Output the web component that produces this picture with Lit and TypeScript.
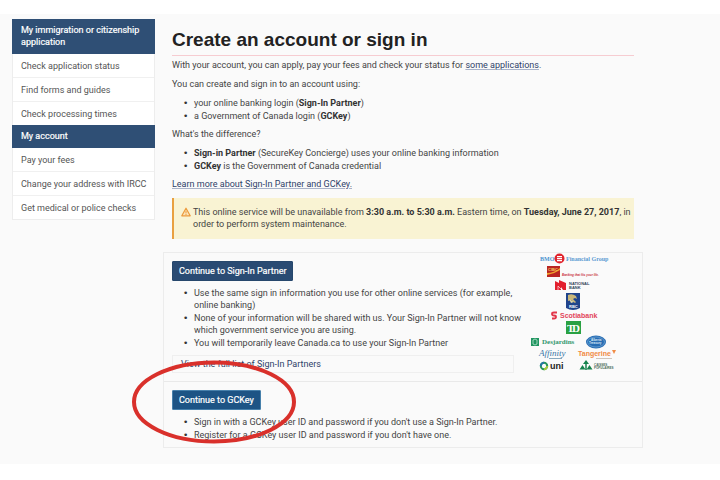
import { LitElement, html, css, svg } from "lit";
import { customElement } from "lit/decorators.js";

const sections = [
  {
    title: "My immigration or citizenship application",
    links: ["Check application status", "Find forms and guides", "Check processing times"],
  },
  {
    title: "My account",
    links: ["Pay your fees", "Change your address with IRCC", "Get medical or police checks"],
  },
];

@customElement("side-menu")
class SideMenu extends LitElement {
  static styles = css`
    :host { display: block; }
    .menu { border: 1px solid #ededed; border-top: 0; background: #fff; }
    .title { margin: 0 -1px; padding: 5px 9px 6px; background: #2f4f75; color: #fff; font-size: 9px; line-height: 12px; font-weight: 400; -webkit-text-stroke: 0.2px #fff; }
    .list { margin: 0; padding: 0; list-style: none; }
    .list li + li { border-top: 1px solid #f0f0f0; }
    .link { display: block; padding: 6px 4px 5px 8px; color: #555; font-size: 9px; line-height: 12px; text-decoration: none; }
  `;
  render() {
    return html`<nav class="menu" aria-label="Section menu">
      ${sections.map(
        (s) => html`<h2 class="title">${s.title}</h2>
          <ul class="list">${s.links.map((l) => html`<li><a class="link" href="#">${l}</a></li>`)}</ul>`
      )}
    </nav>`;
  }
}

@customElement("partner-logos")
class PartnerLogos extends LitElement {
  static styles = css`
    :host { display: block; }
    svg { display: block; }
    .serif { font-family: "Liberation Serif", serif; }
    .sans { font-family: "Liberation Sans", sans-serif; }
    .bold { font-weight: 700; }
    .italic { font-style: italic; }
  `;
  render() {
    return html`<svg width="88" height="120" viewBox="0 0 88 120" role="img" aria-label="Sign-In Partners">
      ${svg`
      <text class="serif bold" x="10" y="8" font-size="6" fill="#4d94cf">BMO</text>
      <circle cx="29.500" cy="5.500" r="5" fill="#e0242d"/>
      <path d="M27 3h5v1.200h-5zM27 5h5v1.200h-5zM27 7h5v1.200h-5z" fill="#fff"/>
      <text class="serif bold" x="36" y="8" font-size="6" fill="#5a9bd2">Financial Group</text>
      <rect x="17" y="13" width="13" height="11" fill="#b92522"/>
      <path d="M17 20q7 0 13-5v2q-6 4-13 5z" fill="#f2a52c"/>
      <text class="sans bold" x="18" y="18" font-size="4" fill="#f8c85e">CIBC</text>
      <text class="sans italic bold" x="32" y="23" font-size="3" fill="#c9303a">Banking that fits your life.</text>
      <path d="M25 28l4 2v-3l7 3v7h-3l-2-3v3h-6z" fill="#e21f2d"/>
      <path d="M28 37v-4l3 3" fill="none" stroke="#fff" stroke-width=".6"/>
      <text class="sans bold" x="39" y="32" font-size="4" fill="#34475a">NATIONAL</text>
      <text class="sans bold" x="39" y="36" font-size="4" fill="#34475a">BANK</text>
      <path d="M36 40h14v15q-7 4-14 0z" fill="#20448c"/>
      <path d="M38 42q4-2 8 1l1 3-2-1-2 1 3 3-1 1-4-3-3 1z" fill="#c9b77a"/>
      <path d="M39 46l5 3-3 1z" fill="#e4d8a6"/>
      <text class="sans bold" x="39" y="55" font-size="4" fill="#fff">RBC</text>
      <path d="M27 59.500h-3q-2 0-2 1.500t2 1.500 2 1.500-2 1.500h-2" fill="none" stroke="#e2364b" stroke-width="1.800"/>
      <text class="sans bold" x="30" y="65" font-size="7" fill="#e2465b">Scotiabank</text>
      <rect x="36" y="68" width="15" height="13" fill="#29a143"/>
      <text class="serif bold" x="37" y="79" font-size="11" fill="#fff">T</text>
      <text class="serif bold" x="42" y="79" font-size="11" fill="#fff">D</text>
      <rect x="1" y="85" width="8" height="8" fill="#219561"/>
      <path d="M5 86l2 1v4l-2 1-2-1v-4z" fill="none" stroke="#d4efe1" stroke-width=".7"/>
      <text class="serif bold" x="12" y="91" font-size="7" fill="#31976d">Desjardins</text>
      <ellipse cx="66" cy="89" rx="10" ry="6.500" fill="#286db3"/>
      <ellipse cx="66" cy="89" rx="8.500" ry="5" fill="none" stroke="#93bfe4" stroke-width=".5"/>
      <text class="sans bold" x="61" y="88" font-size="3" fill="#dceaf7">Alberta</text>
      <text class="sans bold" x="59" y="91" font-size="3" fill="#dceaf7">Treasury</text>
      <text class="serif italic" x="9" y="103" font-size="9" fill="#3976a7">Affinity</text>
      <rect x="19" y="105" width="13" height="1" fill="#86a8bf"/>
      <text class="sans bold" x="48" y="103" font-size="7" fill="#f18b45">Tangerine</text>
      <path d="M82 97l2 4 2-4z" fill="#f18b45"/>
      <rect x="66" y="105" width="16" height="1" fill="#d0c5ba"/>
      <circle cx="14" cy="113" r="3.200" fill="none" stroke="#27955c" stroke-width="2"/>
      <path d="M10.800 113a3.200 3.200 0 0 1 3.200-3.200" fill="none" stroke="#2577a3" stroke-width="2"/>
      <path d="M14 116.200a3.200 3.200 0 0 0 3.200-3.200" fill="none" stroke="#a4c93b" stroke-width="2"/>
      <text class="sans bold" x="20" y="116" font-size="9" fill="#222">uni</text>
      <path d="M56 107l3 4h-6zM52.500 112l3 4.500h-6zM59.500 112l3 4.500h-6z" fill="#16834d"/>
      <path d="M56 111v6" stroke="#16834d" stroke-width="1.500"/>
      <text class="sans bold" x="64" y="113" font-size="3" fill="#4b6b5c">CAISSES</text>
      <text class="sans bold" x="64" y="116" font-size="3" fill="#4b6b5c">POPULAIRES</text>`}
    </svg>`;
  }
}

@customElement("app-root")
class AppRoot extends LitElement {
  static styles = css`
    :host { display: block; padding: 14px 0; background: #fff; color: #444; font-family: Roboto, "Liberation Sans", Arial, sans-serif; font-size: 9px; line-height: 12px; }
    .page { display: grid; grid-template-columns: 143px minmax(0, 1fr); column-gap: 17px; align-items: start; padding: 5px 12% 16px 12px; background: #fafafa; }
    h1 { margin: 9px 0 3px; padding-bottom: 3px; border-bottom: 1px solid #f6ccd1; color: #222; font-family: "Liberation Sans", Arial, sans-serif; font-size: 19px; line-height: 24px; }
    p { margin: 0 0 7px; }
    ul { margin: 0 0 6px; padding-left: 22px; }
    li + li { margin-top: 1px; }
    li::marker { content: "•\\00a0\\00a0"; font-family: "DejaVu Sans", sans-serif; color: #333; }
    b { color: #333; }
    a { color: #2f4269; }
    .text-link { text-decoration: underline; text-decoration-color: #a9b3c9; }
    .alert { display: flex; gap: 2px; margin: 8px 0 13px; padding: 8px 2px 9px 7px; border-left: 2px solid #e9a040; background: #f9f3d3; }
    .alert p { margin: 0; }
    .alert svg { flex: none; margin-top: 1px; }
    .panel { margin: 0 -9px; border: 1px solid #ececec; }
    .row { position: relative; padding: 8px; }
    .row + .row { border-top: 1px solid #e9e9e9; padding-bottom: 6px; }
    .row ul { margin-top: 6px; padding-right: 8px; }
    .row.last ul { margin-bottom: 0; }
    .partner { display: flex; justify-content: space-between; padding: 0 24px 0 0; }
    .info { flex: 1; padding: 8px 0 8px 8px; }
    .btn { display: block; padding: 3px 6px; border: 1px solid #26476c; border-radius: 1px; background: #2a4b73; color: #fff; font: inherit; -webkit-text-stroke: 0.2px #fff; }
    .btn.active { border-color: #4780ab; background: #1d5485; }
    details { margin-right: 16px; border: 1px solid #efefef; }
    summary { padding: 2px 8px; color: #2f4269; list-style: none; }
    .ring { position: absolute; left: -34px; top: -24px; pointer-events: none; }
  `;
  render() {
    return html`<div class="page">
      <side-menu></side-menu>
      <main>
        <h1>Create an account or sign in</h1>
        <p>With your account, you can apply, pay your fees and check your status for <a class="text-link" href="#">some applications</a>.</p>
        <p>You can create and sign in to an account using:</p>
        <ul>
          <li>your online banking login (<b>Sign-In Partner</b>)</li>
          <li>a Government of Canada login (<b>GCKey</b>)</li>
        </ul>
        <p>What's the difference?</p>
        <ul>
          <li><b>Sign-in Partner</b> (SecureKey Concierge) uses your online banking information</li>
          <li><b>GCKey</b> is the Government of Canada credential</li>
        </ul>
        <a class="text-link" href="#">Learn more about Sign-In Partner and GCKey.</a>
        <section class="alert">
          <svg width="10" height="10" viewBox="0 0 10 10" aria-hidden="true">
            <path d="M5 1.200L9.200 8.800H.8z" fill="#fbe3b8" stroke="#ec9a3c" stroke-width="1.200" stroke-linejoin="round" />
            <path d="M5 3.800v2.600M5 7v1" stroke="#ec9a3c" stroke-width="1" />
          </svg>
          <p>This online service will be unavailable from <b>3:30 a.m. to 5:30 a.m.</b> Eastern time, on <b>Tuesday, June 27, 2017</b>, in order to perform system maintenance.</p>
        </section>
        <div class="panel">
          <section class="row partner">
            <div class="info">
              <button class="btn" type="button">Continue to Sign-In Partner</button>
              <ul>
                <li>Use the same sign in information you use for other online services (for example, online banking)</li>
                <li>None of your information will be shared with us. Your Sign-In Partner will not know which government service you are using.</li>
                <li>You will temporarily leave Canada.ca to use your Sign-In Partner</li>
              </ul>
              <details><summary>View the full list of Sign-In Partners</summary></details>
            </div>
            <partner-logos></partner-logos>
          </section>
          <section class="row last">
            <button class="btn active" type="button">Continue to GCKey</button>
            <ul>
              <li>Sign in with a GCKey user ID and password if you don't use a Sign-In Partner.</li>
              <li>Register for a GCKey user ID and password if you don't have one.</li>
            </ul>
            <svg class="ring" width="168" height="88" viewBox="0 0 168 88" aria-hidden="true">
              <ellipse cx="84" cy="44" rx="80" ry="39.500" fill="none" stroke="#d9302b" stroke-width="4" />
            </svg>
          </section>
        </div>
      </main>
    </div>`;
  }
}
